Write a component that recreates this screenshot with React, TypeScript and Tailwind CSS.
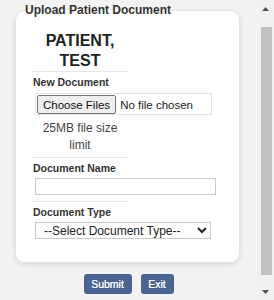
export default function App() {
  return (
    <div className="flex h-[300px] overflow-hidden bg-[#f3f3f3] font-['Liberation_Sans',Arial,sans-serif] text-[#333]">
      <main className="flex-1 pt-[3px]">
        {/* ── Card ─────────────────────────────────────────────── */}
        <fieldset className="ml-[15px] w-[225px] rounded-[10px] border border-[#e2e2e2] bg-white pb-[23px] shadow-[0_2px_5px_rgba(0,0,0,0.12)]">
          <legend className="ml-[9px] text-[12px] font-bold leading-[15px] text-[#333]">
            Upload Patient Document
          </legend>

          <div className="ml-[16px] w-[96px]">
            {/* Patient name */}
            <div className="border-b border-[#e6e6e6] pt-[13px] text-center text-[16px] font-bold leading-[20px] text-[#222]">
              PATIENT,
              <br />
              TEST
            </div>

            {/* New document */}
            <div className="border-b border-[#e6e6e6] pt-[4px] pb-[3px]">
              <Label>New Document</Label>
              <input
                type="file"
                multiple
                className="mt-[4px] ml-[3px] block h-[22px] w-[177px] border border-[#e4e4e4] bg-white p-[1px] text-[11.5px] leading-[18px] text-[#222] file:mr-[4px] file:h-[19px] file:rounded-[2px] file:border file:border-[#767676] file:bg-[#efefef] file:px-[5px] file:text-[11.5px] file:text-[#111]"
              />
              <p className="mt-[5px] text-center text-[12px] leading-[17px] text-[#444]">
                25MB file size limit
              </p>
            </div>

            {/* Document name */}
            <div className="border-b border-[#e6e6e6] pt-[4px] pb-[6px]">
              <Label>Document Name</Label>
              <input
                type="text"
                className="mt-[3px] ml-[3px] block h-[17px] w-[181px] border border-[#c9c9c9] bg-white px-[3px] text-[12px]"
              />
            </div>

            {/* Document type */}
            <div className="pt-[4px]">
              <Label>Document Type</Label>
              <select className="mt-[3px] ml-[3px] block h-[17px] w-[176px] border border-[#c9c9c9] bg-white pl-[4px] text-[12px] leading-[15px] text-[#222]">
                <option>--Select Document Type--</option>
              </select>
            </div>
          </div>
        </fieldset>

        {/* ── Actions ──────────────────────────────────────────── */}
        <div className="mt-[11px] flex justify-center gap-[9px]">
          <ActionButton width="w-[48px]">Submit</ActionButton>
          <ActionButton width="w-[33px]">Exit</ActionButton>
        </div>
      </main>

      <FakeScrollbar />
    </div>
  );
}

function Label({ children }: { children: React.ReactNode }) {
  return (
    <p className="pl-[1px] text-[10.5px] font-bold leading-[13px] whitespace-nowrap text-[#333]">
      {children}
    </p>
  );
}

function ActionButton({
  children,
  width,
}: {
  children: React.ReactNode;
  width: string;
}) {
  return (
    <button
      className={`${width} h-[20px] rounded-[3px] bg-[#4b6592] text-[10.5px] leading-[20px] text-white [text-shadow:0_0_0.4px_#fff]`}
    >
      {children}
    </button>
  );
}

// Window scrollbar as it shows in the screenshot (page scrolled a little)
function FakeScrollbar() {
  return (
    <div className="flex w-[17px] shrink-0 flex-col bg-[#f1f1f1]">
      <div className="flex h-[17px] items-center justify-center">
        <svg width="7" height="4" viewBox="0 0 7 4">
          <path d="M0 4 L3.5 0 L7 4 Z" fill="#505050" />
        </svg>
      </div>
      <div className="flex-1 pt-[10px] pb-[8px]">
        <div className="ml-[4px] h-full w-[11px] bg-[#c1c1c1]" />
      </div>
      <div className="flex h-[17px] items-center justify-center">
        <svg width="7" height="4" viewBox="0 0 7 4">
          <path d="M0 0 L7 0 L3.5 4 Z" fill="#505050" />
        </svg>
      </div>
    </div>
  );
}
